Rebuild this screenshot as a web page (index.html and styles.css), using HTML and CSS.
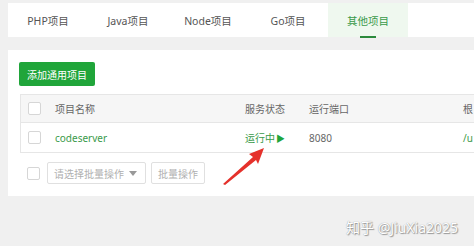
FILE: index.html
```html
<!DOCTYPE html>
<html lang="zh-CN">
  <head>
    <meta charset="UTF-8" />
    <meta name="viewport" content="width=device-width, initial-scale=1.0" />
    <title>网站 - 其他项目</title>
    <link rel="stylesheet" href="styles.css">
  </head>
  <body>
    <div class="page">
      <div class="tabs">
        <div class="tab">PHP项目</div>
        <div class="tab">Java项目</div>
        <div class="tab">Node项目</div>
        <div class="tab">Go项目</div>
        <div class="tab active">其他项目</div>
      </div>

      <div class="card">
        <button class="btn-green">添加通用项目</button>

        <table class="project-table">
          <thead>
            <tr>
              <th class="col-check"><span class="checkbox"></span></th>
              <th class="col-name">项目名称</th>
              <th class="col-status">服务状态</th>
              <th class="col-port">运行端口</th>
              <th>根</th>
            </tr>
          </thead>
          <tbody>
            <tr>
              <td class="col-check"><span class="checkbox"></span></td>
              <td class="green">codeserver</td>
              <td class="green">运行中<span class="play">&#9654;</span></td>
              <td>8080</td>
              <td class="green">/u</td>
            </tr>
          </tbody>
        </table>

        <div class="batch">
          <span class="checkbox"></span>
          <div class="select">请选择批量操作<span class="caret"></span></div>
          <button class="btn-plain">批量操作</button>
        </div>
      </div>
    </div>

    <svg class="arrow" width="474" height="246" viewBox="0 0 474 246">
      <polygon points="264,148 249,154 253,157 223,184 225,185 256,160 258,164" fill="#e5312b" />
    </svg>

    <div class="watermark">知乎 @JiuXia2025</div>
  </body>
</html>
```

FILE: styles.css
```css
body {
  margin: 0;
  width: 474px;
  height: 246px;
  overflow: hidden;
  background-color: #f0f0f0;
  font-family: "Noto Sans", "Noto Sans CJK SC", sans-serif;
  font-size: 10px;
  color: #666;
  position: relative;
}

.page {
  padding: 3px 0 0 8px;
}

.tabs {
  display: flex;
  height: 34px;
  background-color: #fff;
}

.tab {
  width: 80px;
  display: flex;
  align-items: center;
  justify-content: center;
  font-size: 10.5px;
  color: #555;
  position: relative;
}

.tab.active {
  background-color: #eff8ef;
  color: #3a9a4a;
}

.tab.active::after {
  content: "";
  position: absolute;
  bottom: -1px;
  left: 32px;
  width: 16px;
  height: 2px;
  background-color: #2b8a3c;
}

.card {
  margin-top: 13px;
  background-color: #fff;
  padding: 12px 0 13px 11px;
  height: 121px;
  overflow: hidden;
}

.btn-green {
  display: block;
  width: 76px;
  height: 24px;
  border: none;
  border-radius: 2px;
  background-color: #20a53a;
  color: #fff;
  font-family: inherit;
  font-size: 10px;
  padding: 0;
}

.project-table {
  margin: 8px 0 0 1px;
  width: 600px;
  border-collapse: collapse;
  border: 1px solid #e6e6e6;
  border-right: none;
}

.project-table th,
.project-table td {
  text-align: left;
  padding: 0 7px;
  font-weight: normal;
  white-space: nowrap;
}

.project-table th {
  height: 27px;
  background-color: #f6f6f6;
  border-bottom: 1px solid #e6e6e6;
  color: #666;
}

.project-table td {
  height: 29px;
  color: #666;
}

.col-check {
  width: 13px;
}

.col-name {
  width: 176px;
}

.col-status {
  width: 50px;
}

.col-port {
  width: 140px;
}

.green {
  color: #3a9a4a !important;
}

.play {
  font-size: 9px;
  margin-left: 1px;
  color: #20a53a;
}

.checkbox {
  display: block;
  width: 11px;
  height: 11px;
  border: 1px solid #d6d6d6;
  border-radius: 2px;
  background-color: #fff;
}

.batch {
  display: flex;
  align-items: center;
  gap: 5px;
  margin-top: 9px;
  padding-left: 8px;
}

.batch .checkbox {
  margin-right: 2px;
}

.select {
  width: 91px;
  height: 20px;
  border: 1px solid #e0e0e0;
  border-radius: 2px;
  display: flex;
  align-items: center;
  padding-left: 6px;
  color: #b0b0b0;
  position: relative;
}

.caret {
  position: absolute;
  right: 8px;
  top: 8px;
  border-left: 4px solid transparent;
  border-right: 4px solid transparent;
  border-top: 5px solid #999;
}

.btn-plain {
  width: 54px;
  height: 22px;
  border: 1px solid #e0e0e0;
  border-radius: 2px;
  background-color: #fff;
  color: #b0b0b0;
  font-family: inherit;
  font-size: 10px;
  padding: 0;
}

.arrow {
  position: absolute;
  left: 0;
  top: 0;
}

.watermark {
  position: absolute;
  left: 346px;
  top: 217px;
  font-size: 14px;
  color: #fff;
  text-shadow: 0 0 1px #888, 1px 1px 1px #999;
}
```
